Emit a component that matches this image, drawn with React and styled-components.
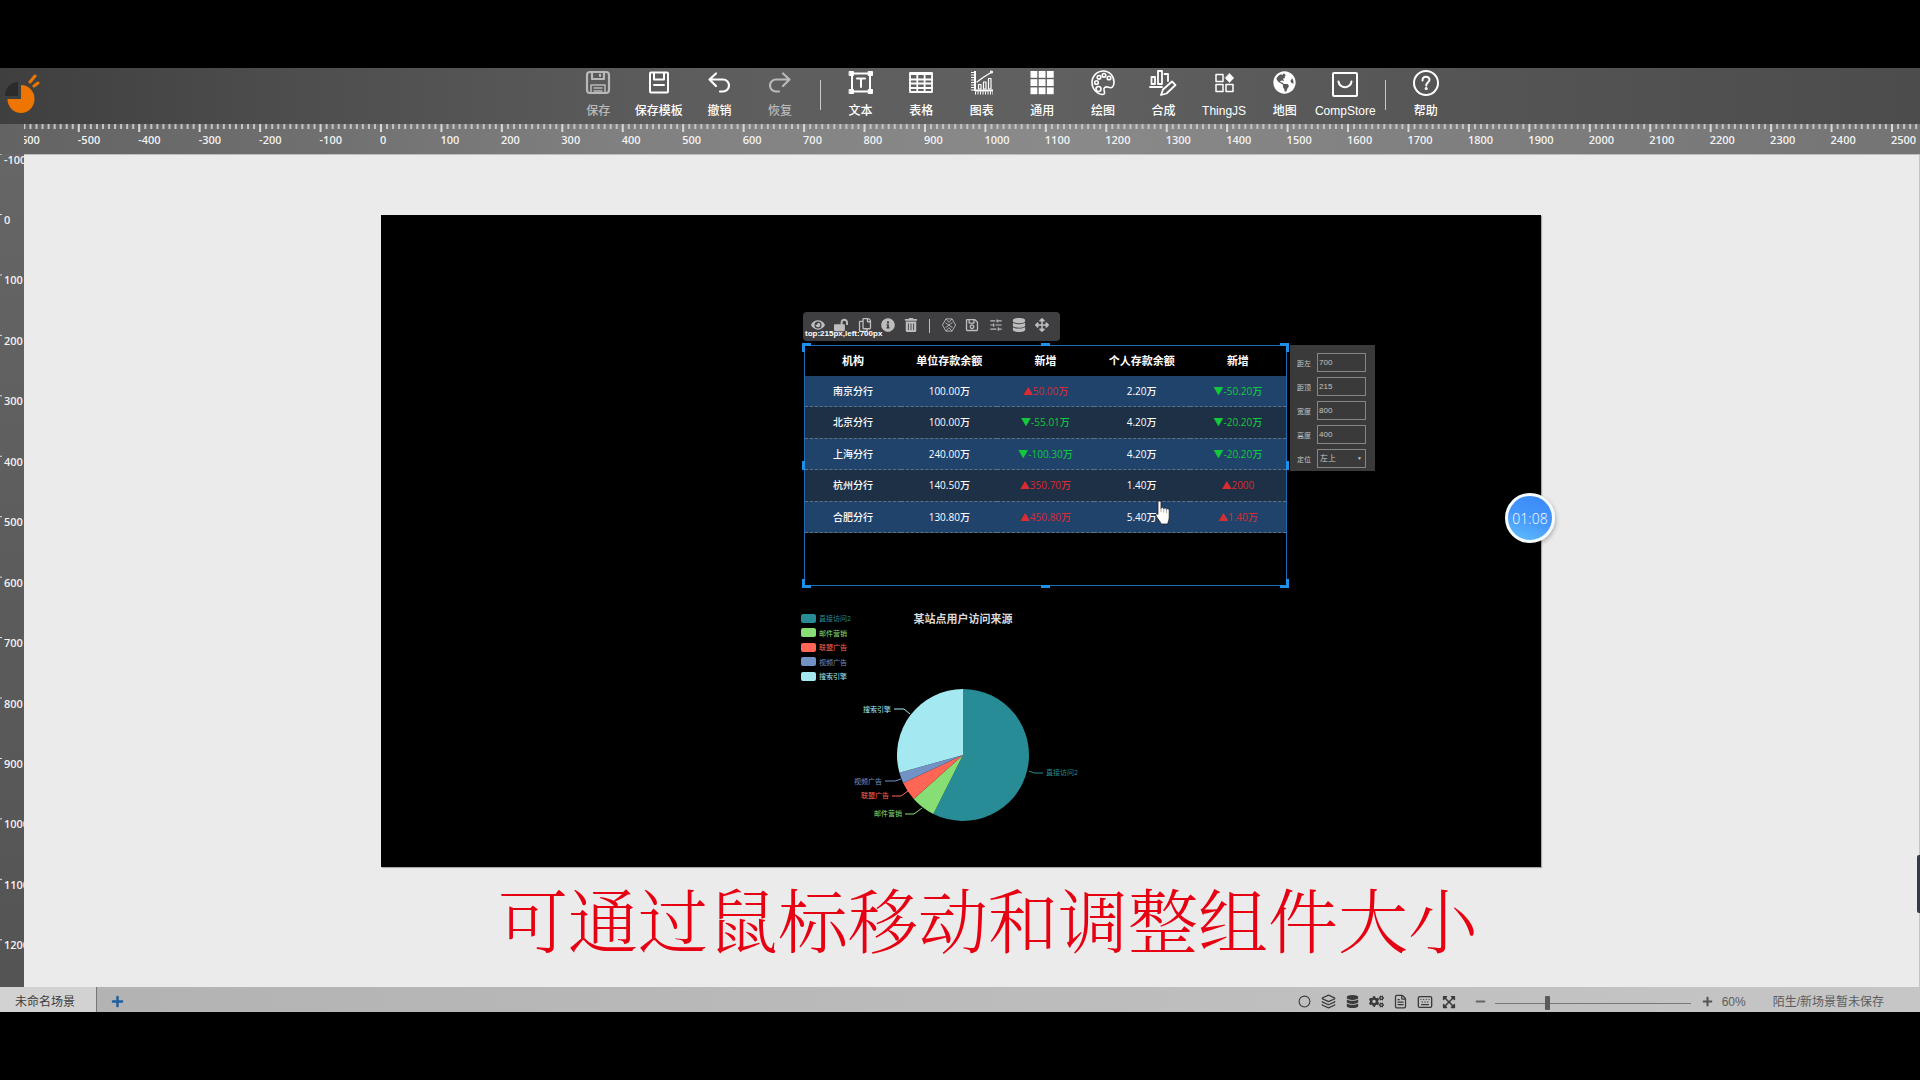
import React, { useState } from 'react';
import styled, { createGlobalStyle, css } from 'styled-components';
import {
  FaEye, FaLockOpen, FaRegCopy, FaInfoCircle, FaTrashAlt, FaRegSave, FaDatabase,
  FaArrowsAlt, FaGlobeAmericas, FaCogs, FaExpandArrowsAlt, FaPlus, FaMinus,
} from 'react-icons/fa';
import { Layers, FileText, Keyboard, SlidersHorizontal, Circle } from 'lucide-react';

const SANS = '"Liberation Sans", "Noto Sans CJK SC", sans-serif';
const HUMANIST = '"Open Sans", "Noto Sans CJK SC", sans-serif';

const GlobalStyle = createGlobalStyle`
  * { box-sizing: border-box; }
  body { margin: 0; background: #000; font-family: ${SANS}; }
  button, input, select { font: inherit; color: inherit; margin: 0; }
  button { border: 0; padding: 0; background: none; cursor: pointer; }
`;

/* ---------- frame ---------- */

const Screen = styled.div`
  display: flex;
  flex-direction: column;
  min-height: 100vh;
  padding: 68px 0;
  background: #000;
  overflow: hidden;
`;

const Header = styled.header`
  display: flex;
  height: 56px;
  color: #fff;
  background: linear-gradient(90deg, #3f3f3f 0%, #4e4e4e 16%, #5d5d5d 36%, #606060 55%, #545454 78%, #4c4c4c 100%);
`;

const Brand = styled.a`
  flex: none;
  width: 104px;
  padding: 6px 0 0 4px;
`;

const Tools = styled.nav`
  flex: 1;
  max-width: 888px;
  margin: 0 auto;
  display: flex;
`;

const Tool = styled.button`
  flex: 1 1 0;
  min-width: 0;
  display: flex;
  flex-direction: column;
  align-items: center;
  gap: 5px;
  padding-top: 1px;
  font-size: 12px;
  line-height: 18px;
  font-weight: 500;
  white-space: nowrap;
  color: ${(p) => (p.disabled ? '#b9b9b9' : '#fff')};
  svg { display: block; width: 26px; height: 28px; overflow: visible; flex: none; }
`;

const ToolDivider = styled.span`
  flex: none;
  display: flex;
  justify-content: center;
  width: 20px;
  padding-top: 12px;
  &::before { content: ''; width: 1px; height: 30px; background: #c9c9c9; }
`;

const TopRuler = styled.div`
  height: 30px;
  padding-left: 24px;
  background: linear-gradient(90deg, #636363 0%, #6f6f6f 16%, #808080 32%, #8a8a8a 55%, #7d7d7d 80%, #747474 100%);
`;

const SideRuler = styled.div`
  flex: none;
  width: 24px;
  background: linear-gradient(180deg, #666 0%, #5c5c5c 50%, #545454 100%);
`;

const Scale = styled.svg`
  display: block;
  width: 100%;
  height: 100%;
  overflow: hidden;
  text { font: 600 11px ${HUMANIST}; fill: #f2f2f2; }
`;

const Workspace = styled.main`
  flex: 1;
  display: flex;
  background: #ebebeb;
  min-height: 833px;
`;

const Canvas = styled.section`
  position: relative;
  flex: 1;
  min-width: 0;
  padding: 60px 0 0 357px;
  border-top: 1px solid #bdbdbd;
  border-right: 1px solid #c4c4c4;
`;

const Stage = styled.div`
  position: relative;
  width: 1160px;
  aspect-ratio: 1160 / 652;
  background: #000;
  box-shadow: 1px 1px 1px #aaa;
`;

const Caption = styled.p`
  margin: 3px 0 0 117px;
  font-family: "Noto Serif CJK SC", "Noto Sans CJK SC", serif;
  font-weight: 300;
  font-size: 70px;
  line-height: 96px;
  white-space: nowrap;
  color: #e60012;
`;

const DrawerHandle = styled.button`
  position: absolute;
  right: -1px;
  top: 700px;
  width: 3px;
  height: 58px;
  border-radius: 2px 0 0 2px;
  background: #343b45;
`;

/* ---------- selected table widget ---------- */

const Widget = styled.div`
  position: absolute;
  left: ${(p) => p.$x}px;
  top: ${(p) => p.$y}px;
  width: ${(p) => p.$w}px;
  height: ${(p) => p.$h}px;
  ${(p) => p.$selected && css`border: 1px solid #1c6db5;`}
`;

const Handle = styled.i`
  position: absolute;
  width: 9px;
  height: 9px;
  border: 0 solid #1e90ea;
  ${(p) => ({
    nw: css`left: -3px; top: -3px; border-width: 3px 0 0 3px;`,
    ne: css`right: -3px; top: -3px; border-width: 3px 3px 0 0;`,
    sw: css`left: -3px; bottom: -3px; border-width: 0 0 3px 3px;`,
    se: css`right: -3px; bottom: -3px; border-width: 0 3px 3px 0;`,
    n: css`left: calc(50% - 5px); top: -3px; border-width: 3px 0 0;`,
    s: css`left: calc(50% - 5px); bottom: -3px; border-width: 0 0 3px;`,
    w: css`left: -3px; top: calc(50% - 5px); border-width: 0 0 0 3px;`,
    e: css`right: -3px; top: calc(50% - 5px); border-width: 0 3px 0 0;`,
  }[p.$at])}
`;

const DataTable = styled.table`
  width: 100%;
  height: 187px;
  table-layout: fixed;
  border-collapse: collapse;
  color: #fff;
  font: 500 10px ${HUMANIST};
  text-align: center;
  th, td { padding: 0; line-height: 16px; white-space: nowrap; }
  th { height: 30px; font-size: 11px; font-weight: 700; }
  thead { height: 30px; }
  tbody tr { background: #1e3046; border-bottom: 1px dashed #5f7182; }
  tbody tr:nth-child(odd) { background: #20436c; }
`;

const Delta = styled.span`
  color: ${(p) => (p.$up ? '#d82c30' : '#12c93a')};
`;

const QuickBar = styled.div`
  position: absolute;
  left: -2px;
  top: -34px;
  display: flex;
  align-items: center;
  width: 257px;
  height: 29px;
  padding: 0 6px 4px 3px;
  border-radius: 4px;
  background: #3f3f41;
  color: #bdbdbd;
`;

const QuickButton = styled.button`
  flex: 1 1 0;
  display: flex;
  justify-content: center;
  svg { display: block; width: 14px; height: 14px; }
`;

const QuickDivider = styled.i`
  width: 1px;
  height: 14px;
  margin: 2px 7px 0 6px;
  background: #bdbdbd;
`;

const PositionHint = styled.span`
  position: absolute;
  left: 0;
  top: -17px;
  font: 700 8px/10px ${SANS};
  color: #fff;
  white-space: nowrap;
`;

const PropertyPanel = styled.form`
  position: absolute;
  left: 485px;
  top: -1px;
  width: 85px;
  padding: 8px 9px 3px 7px;
  display: grid;
  grid-template-columns: 1fr 49px;
  grid-auto-rows: 19px;
  row-gap: 5px;
  align-items: center;
  background: #3a3a3a;
  color: #c4c4c4;
  font: 8px ${SANS};
  label { font-size: 7px; white-space: nowrap; }
`;

const fieldBox = css`
  width: 100%;
  height: 19px;
  padding: 0 1px;
  border: 1px solid #868686;
  border-radius: 0;
  background: #3a3a3a;
  outline: 0;
`;

const Field = styled.input`${fieldBox}`;

const SelectWrap = styled.span`
  position: relative;
  &::after {
    content: '▼';
    position: absolute;
    right: 4px;
    top: 6px;
    font-size: 5px;
    line-height: 6px;
    pointer-events: none;
  }
`;

const Select = styled.select`
  ${fieldBox}
  padding-left: 2px;
  appearance: none;
`;

const Pointer = styled.svg`
  position: absolute;
  left: 348px;
  top: 154px;
  width: 20px;
  height: 26px;
`;

/* ---------- pie widget ---------- */

const ChartTitle = styled.h2`
  margin: 0 0 39px;
  text-align: center;
  font: 700 11px/16px ${HUMANIST};
  color: #dadada;
`;

const Legend = styled.ul`
  position: absolute;
  left: 3px;
  top: 0;
  display: flex;
  flex-direction: column;
  justify-content: space-between;
  height: 72px;
  margin: 0;
  padding: 0;
  list-style: none;
  font: 7px ${HUMANIST};
`;

const LegendItem = styled.li`
  display: flex;
  align-items: center;
  gap: 3px;
  height: 14px;
  color: ${(p) => p.$color};
  &::before {
    content: '';
    width: 15px;
    height: 9px;
    border-radius: 2px;
    background: ${(p) => p.$color};
  }
`;

const PieSvg = styled.svg`
  display: block;
  width: 330px;
  height: 180px;
  overflow: visible;
  text { font: 7px ${HUMANIST}; }
`;

/* ---------- timer ---------- */

const Timer = styled.div`
  position: absolute;
  left: 1124px;
  top: 278px;
  width: 50px;
  height: 50px;
  display: flex;
  align-items: center;
  justify-content: center;
  border: 3px solid #f6fbff;
  border-radius: 50%;
  background: linear-gradient(200deg, #3a8bf8 10%, #4596fb 50%, #62c0fb 100%);
  box-shadow: 1px 2px 4px rgba(0, 0, 0, 0.25);
  color: #fff;
  font: 300 14px ${HUMANIST};
`;

/* ---------- footer ---------- */

const Footer = styled.footer`
  display: flex;
  align-items: stretch;
  height: 25px;
  padding-right: 36px;
  background: linear-gradient(90deg, #b2b2b2, #b9b9b9 40%, #c6c6c6);
  font-size: 12px;
  color: #444;
`;

const SceneTab = styled.button`
  width: 97px;
  padding: 2px 20px 0 15px;
  border-right: 1px solid #777;
  background: #d2d2d2;
  color: #3c3c3c;
  white-space: nowrap;
  text-align: left;
`;

const FootButton = styled.button`
  flex: none;
  width: 24px;
  padding-top: 4px;
  display: flex;
  align-items: center;
  justify-content: center;
  color: ${(p) => p.$color || '#3a3a3a'};
  svg { width: ${(p) => p.$size || 14}px; height: ${(p) => p.$size || 14}px; }
`;

const AddScene = styled(FootButton)`
  width: 40px;
  padding-top: 3px;
`;

const FootTools = styled.div`
  display: flex;
  margin-left: auto;
  margin-right: 8px;
`;

const ZoomSlider = styled.input`
  appearance: none;
  width: 196px;
  height: 14px;
  margin: 9px 5px 0 2px;
  align-self: flex-start;
  background: linear-gradient(#777, #777) center / 100% 1px no-repeat;
  &::-webkit-slider-thumb {
    appearance: none;
    width: 5px;
    height: 14px;
    border-radius: 1px;
    background: #5a5a5a;
  }
`;

const FootText = styled.span`
  padding-top: 4px;
  line-height: 22px;
  color: #5c5c5c;
  white-space: nowrap;
`;

const ZoomValue = styled(FootText)`
  width: 53px;
  padding-left: 2px;
`;

/* ---------- icons ---------- */

const Line = ({ children, w = 2 }) => (
  <svg viewBox="0 0 26 28" fill="none" stroke="currentColor" strokeWidth={w} strokeLinejoin="round" strokeLinecap="round">
    {children}
  </svg>
);

const icons = {
  save: (
    <Line w={2.2}>
      <rect x="2" y="3" width="22" height="21" rx="3" />
      <path d="M7 3v7h12V3M15 5.5v1.500" />
      <path d="M6 24v-8h14v8M9 19h8M9 22h8" strokeWidth="1.5" />
    </Line>
  ),
  template: (
    <Line>
      <rect x="4" y="3.5" width="18" height="20" rx="1" />
      <path d="M8 4v6.5h10V4M8 16h10" />
    </Line>
  ),
  undo: <Line w={2.2}><path d="M10 4.5L3.5 10.5L10 17M4 10.5H17a6 6 0 0 1 0 12H14" /></Line>,
  redo: <Line w={2.2}><path d="M16 4.5L22.5 10.5L16 17M22 10.5H9a6 6 0 0 0 0 12H12" /></Line>,
  text: (
    <Line>
      <path d="M5.5 4.5h15M5.5 22.5h15M4 6v15M22 6v15M9 9.5h8M13 9.5v8.5" />
      <g fill="#fff" strokeWidth="1">
        <rect x="1.5" y="2.5" width="4" height="4" />
        <rect x="20.5" y="2.5" width="4" height="4" />
        <rect x="1.5" y="20.5" width="4" height="4" />
        <rect x="20.5" y="20.5" width="4" height="4" />
      </g>
    </Line>
  ),
  table: (
    <Line w={1.8}>
      <rect x="2" y="4" width="22" height="19" />
      <path d="M2 5h22M2 10.5h22M2 14.5h22M2 19h22M9.3 5v18M16.6 5v18" />
    </Line>
  ),
  chart: (
    <Line w={1.2}>
      <path d="M6 2v20M6 21.5h18" strokeWidth="2" strokeLinecap="butt" />
      <path d="M3.5 3v20" strokeWidth="3" strokeDasharray="1 1.5" strokeLinecap="butt" />
      <path d="M6 24h18" strokeWidth="3" strokeDasharray="1 1.5" strokeLinecap="butt" />
      <path d="M9.5 20v-4.5h2.5V20zM14.500 20v-7h2.5v7zM19.5 20V9.5H22V20zM8 13l6-4.5L22 3.5" />
      <circle cx="22.5" cy="3" r="1" />
    </Line>
  ),
  grid: (
    <svg viewBox="0 0 26 28" fill="currentColor">
      {[0, 1, 2].map((r) => [0, 1, 2].map((c) => (
        <rect key={`${r}${c}`} x={1.5 + c * 8.2} y={2 + r * 8.2} width="6.8" height="6.8" />
      )))}
    </svg>
  ),
  palette: (
    <Line w={1.6}>
      <path d="M13.5 2C7 2 2 7 2 13.5S7 25 12 25.5c3.5.3 2.5-2.5 2-4.5-.5-2.5 1.5-3.5 3.5-3 2 .5 3.5 1.5 5 0 1.3-1.3 1.5-3 1.5-4.5C24 7 19.5 2 13.500 2z" />
      <circle cx="6.5" cy="13.5" r="1.8" />
      <circle cx="9" cy="8.3" r="1.8" />
      <circle cx="14" cy="6.3" r="1.8" />
      <circle cx="19" cy="9" r="1.8" />
      <circle cx="8.5" cy="20" r="2.5" />
    </Line>
  ),
  compose: (
    <Line w={1.8}>
      <path d="M1.5 8h3.5v7H1.500zM8 2h4v13H8zM14.5 5H18v7M0 18h12" />
      <path d="M22 12.5l3.5 3.5-9 8.5-5.5 1.5 2-5.5z" />
    </Line>
  ),
  thing: (
    <Line w={1.5}>
      <path d="M5 5.5h7v7H5zM5 15.5h7v7H5zM15 15.5h7v7h-7z" />
      <path d="M18.5 4.5l4.3 4.5-4.3 4.5-4.3-4.5z" fill="currentColor" strokeWidth=".5" />
    </Line>
  ),
  globe: <svg viewBox="0 0 26 28"><FaGlobeAmericas x="1" y="2" style={{ width: 23, height: 23 }} /></svg>,
  store: (
    <Line>
      <rect x="1" y="4" width="24" height="23" rx="1" />
      <path d="M6.5 12.5c1 7.5 12 7.5 13 0" />
    </Line>
  ),
  help: (
    <Line>
      <circle cx="13" cy="14" r="12" />
      <path d="M9.5 11.5c0-5 7-4.5 7-.7 0 2.5-3.3 2.5-3.3 5.7" />
      <circle cx="13.2" cy="19.5" r=".6" fill="currentColor" />
    </Line>
  ),
};

const HexIcon = () => (
  <svg viewBox="0 0 16 16" fill="none" stroke="currentColor" strokeWidth="1">
    <path d="M4.5 1h7L15.5 8l-4 7h-7L.5 8z" />
    <path d="M4.5 1L8 5l3.5-4M4.5 15L8 11l3.5 4M4 5.5L12 11M12 5L4 11" />
  </svg>
);

const Logo = () => (
  <svg width="38" height="42" viewBox="0 0 38 42">
    <path d="M17 11a13.5 14 0 1 1-13.5 14H17z" fill="#ee7600" />
    <path d="M14 8v14H1C1 14 7 8 14 8z" fill="#2b2b2b" />
    <path d="M26 8l5-6M30 12l4-3" stroke="#ee7600" strokeWidth="3" strokeLinecap="round" />
  </svg>
);

/* ---------- rulers ---------- */

const UNIT = 0.6044;
const range = (from, to, step) => Array.from({ length: Math.floor((to - from) / step) + 1 }, (_, i) => from + i * step);

const HorizontalScale = () => (
  <Scale>
    {range(-600, 2550, 10).map((v) => (
      <rect key={v} x={356 + v * UNIT} y="0" width="2" height={v % 100 ? 5 : 8} fill={v % 100 ? '#c4c4c4' : '#d8d8d8'} />
    ))}
    {range(-600, 2500, 100).map((v) => <text key={v} x={356 + v * UNIT} y="20">{v}</text>)}
  </Scale>
);

const VerticalScale = () => (
  <Scale>
    {range(-100, 1200, 100).map((v) => (
      <g key={v}>
        <rect x="0" y={60 + v * UNIT} width="2" height="1" fill="#ddd" />
        <text x="4" y={70 + v * UNIT}>{v}</text>
      </g>
    ))}
  </Scale>
);

/* ---------- data ---------- */

const tools = [
  { icon: 'save', label: '保存', disabled: true },
  { icon: 'template', label: '保存模板' },
  { icon: 'undo', label: '撤销' },
  { icon: 'redo', label: '恢复', disabled: true },
  null,
  { icon: 'text', label: '文本' },
  { icon: 'table', label: '表格' },
  { icon: 'chart', label: '图表' },
  { icon: 'grid', label: '通用' },
  { icon: 'palette', label: '绘图' },
  { icon: 'compose', label: '合成' },
  { icon: 'thing', label: 'ThingJS' },
  { icon: 'globe', label: '地图' },
  { icon: 'store', label: 'CompStore' },
  null,
  { icon: 'help', label: '帮助' },
];

const columns = ['机构', '单位存款余额', '新增', '个人存款余额', '新增'];
const rows = [
  ['南京分行', '100.00万', '▲50.00万', '2.20万', '▼-50.20万'],
  ['北京分行', '100.00万', '▼-55.01万', '4.20万', '▼-20.20万'],
  ['上海分行', '240.00万', '▼-100.30万', '4.20万', '▼-20.20万'],
  ['杭州分行', '140.50万', '▲350.70万', '1.40万', '▲2000'],
  ['合肥分行', '130.80万', '▲450.80万', '5.40万', '▲1.40万'],
];

const slices = [
  { name: '直接访问2', color: '#288c96', to: 206.7, line: '231,105 236,107 245,107', x: 248, y: 109 },
  { name: '邮件营销', color: '#86de74', to: 228.3, line: '124,142 116,148 107,148', x: 76, y: 150 },
  { name: '联盟广告', color: '#ff6656', to: 245, line: '110,125 103,130 94,130', x: 63, y: 132 },
  { name: '视频广告', color: '#7291c4', to: 254.4, line: '103,113 97,115 87,115', x: 56, y: 118 },
  { name: '搜索引擎', color: '#a4e9f1', to: 360, line: '112,48 106,43 96,43', x: 65, y: 46 },
];

const polar = (deg) => {
  const a = (deg * Math.PI) / 180;
  return `${165 + 66 * Math.sin(a)} ${89 - 66 * Math.cos(a)}`;
};

const Pie = () => (
  <PieSvg viewBox="0 0 330 180" role="img" aria-label="某站点用户访问来源">
    {slices.map((s, i) => {
      const from = i ? slices[i - 1].to : 0;
      return (
        <g key={s.name}>
          <path d={`M165 89L${polar(from)}A66 66 0 ${s.to - from > 180 ? 1 : 0} 1 ${polar(s.to)}Z`} fill={s.color} />
          <polyline points={s.line} fill="none" stroke={s.color} />
          <text x={s.x} y={s.y} fill={s.color}>{s.name}</text>
        </g>
      );
    })}
  </PieSvg>
);

const quickLeft = [['预览', FaEye], ['解锁', FaLockOpen], ['复制', FaRegCopy], ['信息', FaInfoCircle], ['删除', FaTrashAlt]];
const quickRight = [['组件', HexIcon], ['保存', FaRegSave], ['设置', SlidersHorizontal], ['数据', FaDatabase], ['移动', FaArrowsAlt]];
const footTools = [['场景', Circle, 13], ['图层', Layers, 15], ['数据源', FaDatabase, 13], ['设置', FaCogs, 15], ['文档', FileText, 15], ['快捷键', Keyboard, 16], ['全屏', FaExpandArrowsAlt, 14]];
const fields = [['left', '距左', '700'], ['top', '距顶', '215'], ['width', '宽度', '800'], ['height', '高度', '400']];

export default function App() {
  const [zoom, setZoom] = useState(60);

  return (
    <>
      <GlobalStyle />
      <Screen>
        <Header>
          <Brand href="#" aria-label="首页"><Logo /></Brand>
          <Tools>
            {tools.map((t, i) => (t
              ? <Tool key={t.label} disabled={t.disabled}>{icons[t.icon]}{t.label}</Tool>
              : <ToolDivider key={i} />))}
          </Tools>
        </Header>
        <TopRuler><HorizontalScale /></TopRuler>
        <Workspace>
          <SideRuler><VerticalScale /></SideRuler>
          <Canvas>
            <Stage>
              <Widget $x={423} $y={130} $w={483} $h={241} $selected>
                <DataTable>
                  <thead><tr>{columns.map((c, i) => <th key={i}>{c}</th>)}</tr></thead>
                  <tbody>
                    {rows.map((r) => (
                      <tr key={r[0]}>
                        {r.map((v, i) => (
                          <td key={i}>{/^[▲▼]/.test(v) ? <Delta $up={v[0] === '▲'}>{v}</Delta> : v}</td>
                        ))}
                      </tr>
                    ))}
                  </tbody>
                </DataTable>
                {['nw', 'n', 'ne', 'e', 'se', 's', 'sw', 'w'].map((d) => <Handle key={d} $at={d} />)}
                <QuickBar>
                  {quickLeft.map(([name, Icon]) => <QuickButton key={name} aria-label={name}><Icon /></QuickButton>)}
                  <QuickDivider />
                  {quickRight.map(([name, Icon]) => <QuickButton key={name} aria-label={name}><Icon /></QuickButton>)}
                </QuickBar>
                <PositionHint>top:215px,left:700px</PositionHint>
                <PropertyPanel>
                  {fields.map(([id, label, value]) => (
                    <React.Fragment key={id}>
                      <label htmlFor={id}>{label}</label>
                      <Field id={id} defaultValue={value} />
                    </React.Fragment>
                  ))}
                  <label htmlFor="anchor">定位</label>
                  <SelectWrap><Select id="anchor"><option>左上</option></Select></SelectWrap>
                </PropertyPanel>
                <Pointer viewBox="0 0 20 26">
                  <path d="M5 2.5C5 .6 8 .6 8 2.5V8.500c.2-1.500 2.800-1.300 2.800.3.3-1.300 2.700-1.100 2.700.6.4-1.200 2.700-.9 2.700.9V17c0 3-1 4-1.500 7H8c-.5-2.500-3-4.500-4.500-7.500-1.500-2.700.5-3.500 1.500-2z" fill="#fff" stroke="#222" strokeWidth=".8" />
                  <path d="M8 8v4M10.800 9v3.500M13.500 10v3" stroke="#777" strokeWidth=".6" />
                </Pointer>
              </Widget>
              <Widget $x={417} $y={396} $w={330} $h={218}>
                <ChartTitle>某站点用户访问来源</ChartTitle>
                <Legend>{slices.map((s) => <LegendItem key={s.name} $color={s.color}>{s.name}</LegendItem>)}</Legend>
                <Pie />
              </Widget>
              <Timer>01:08</Timer>
            </Stage>
            <Caption>可通过鼠标移动和调整组件大小</Caption>
            <DrawerHandle aria-label="展开面板" />
          </Canvas>
        </Workspace>
        <Footer>
          <SceneTab>未命名场景</SceneTab>
          <AddScene $color="#1d5f9f" $size={13} aria-label="新增场景"><FaPlus /></AddScene>
          <FootTools>
            {footTools.map(([name, Icon, size]) => <FootButton key={name} $size={size} aria-label={name}><Icon /></FootButton>)}
          </FootTools>
          <FootButton $color="#666" $size={11} aria-label="缩小" onClick={() => setZoom((z) => Math.max(10, z - 10))}><FaMinus /></FootButton>
          <ZoomSlider type="range" min="10" max="200" value={zoom} aria-label="缩放" onChange={(e) => setZoom(Number(e.target.value))} />
          <FootButton $color="#555" $size={11} aria-label="放大" onClick={() => setZoom((z) => Math.min(200, z + 10))}><FaPlus /></FootButton>
          <ZoomValue>{zoom}%</ZoomValue>
          <FootText>陌生/新场景暂未保存</FootText>
        </Footer>
      </Screen>
    </>
  );
}
